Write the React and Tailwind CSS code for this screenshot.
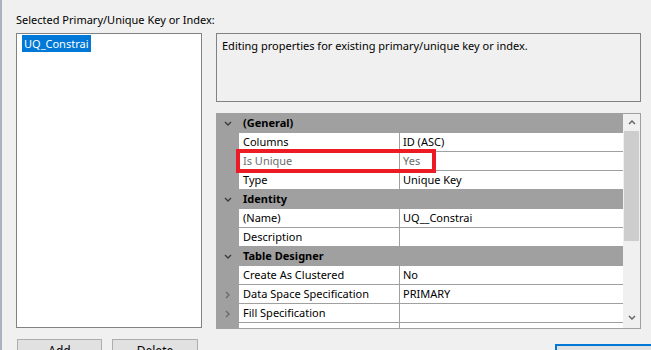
import React from "react";

const Chevron = ({ dir = "down", color = "#404040" }) => {
  const pts = {
    down: "1,2 4,5 7,2",
    right: "2,1 5,4 2,7",
    up: "1,5 4,2 7,5",
  }[dir];
  return (
    <svg width="8" height="8" viewBox="0 0 8 8" className="block">
      <polyline points={pts} fill="none" stroke={color} strokeWidth="1.4" />
    </svg>
  );
};

const rows = [
  { type: "header", name: "(General)" },
  { name: "Columns", value: "ID (ASC)" },
  { name: "Is Unique", value: "Yes", disabled: true },
  { name: "Type", value: "Unique Key" },
  { type: "header", name: "Identity" },
  { name: "(Name)", value: "UQ__Constrai" },
  { name: "Description", value: "" },
  { type: "header", name: "Table Designer" },
  { name: "Create As Clustered", value: "No" },
  { name: "Data Space Specification", value: "PRIMARY", expand: true },
  { name: "Fill Specification", value: "", expand: true },
  { name: "", value: "" },
];

const Row = ({ row }) => {
  if (row.type === "header") {
    return (
      <div className="flex h-[19px] bg-[#a0a0a0] items-center shrink-0">
        <div className="w-[22px] flex justify-center">
          <Chevron dir="down" color="#3c3c3c" />
        </div>
        <span className="pl-[4px] font-bold text-black">{row.name}</span>
      </div>
    );
  }
  const txt = row.disabled ? "text-[#6d6d6d]" : "text-black";
  return (
    <div className="flex h-[19px] shrink-0">
      <div className="w-[22px] bg-[#a0a0a0] flex items-center justify-center">
        {row.expand && <Chevron dir="right" color="#6a6a6a" />}
      </div>
      <div className="flex flex-1 border-b border-[#a0a0a0] bg-white">
        <div className={`w-[161px] border-r border-[#a0a0a0] pl-[4px] leading-[18px] ${txt}`}>
          {row.name}
        </div>
        <div className={`flex-1 pl-[3px] leading-[18px] ${txt}`}>{row.value}</div>
      </div>
    </div>
  );
};

const App = () => {
  return (
    <div
      className="relative w-[651px] h-[350px] overflow-hidden bg-[#f0f0f0] border-l-2 border-[#a9b3c0] text-[11px] text-black"
      style={{ fontFamily: '"Noto Sans", "Liberation Sans", sans-serif' }}
    >
      <div className="pl-[14px] pt-[11px] h-[33px] leading-[18px]">
        Selected Primary/Unique Key or Index:
      </div>
      <div className="flex pl-[14px] gap-[14px]">
        <div className="w-[186px] h-[295px] border border-[#828282] bg-white pl-[5px] pt-[1px]">
          <span className="inline-block bg-[#0078d7] text-white px-[2px] leading-[17px]">
            UQ_Constrai
          </span>
        </div>
        <div className="w-[425px] flex flex-col gap-[11px]">
          <div className="h-[69px] border border-[#828282] bg-[#f0f0f0] pl-[5px] pt-[3px] leading-[18px]">
            Editing properties for existing primary/unique key or index.
          </div>
          <div className="h-[216px] border border-[#a0a0a0] flex overflow-hidden">
            <div className="flex-1 flex flex-col overflow-hidden">
              {rows.map((r, i) => (
                <Row key={i} row={r} />
              ))}
            </div>
            <div className="w-[17px] bg-[#f0f0f0] flex flex-col">
              <div className="h-[17px] flex items-center justify-center">
                <Chevron dir="up" color="#606060" />
              </div>
              <div className="mx-[1px] h-[110px] bg-[#cdcdcd]" />
              <div className="flex-1" />
              <div className="h-[17px] flex items-center justify-center mb-[2px]">
                <Chevron dir="down" color="#606060" />
              </div>
            </div>
          </div>
        </div>
      </div>
      <div className="flex pl-[15px] pt-[10px] gap-[10px]">
        <div className="w-[85px] h-[23px] border border-[#adadad] bg-[#e1e1e1] text-center text-[12px] leading-[21px]">
          Add
        </div>
        <div className="w-[86px] h-[23px] border border-[#adadad] bg-[#e1e1e1] text-center text-[12px] leading-[21px]">
          Delete
        </div>
        <div className="flex-1" />
        <div className="w-[100px] h-[23px] mt-[5px] border-2 border-[#0078d7] bg-[#e1e1e1] -mr-[4px]" />
      </div>
      <div className="absolute left-[234px] top-[149px] w-[200px] h-[24px] border-4 border-[#ed1c24]" />
    </div>
  );
};

export default App;
